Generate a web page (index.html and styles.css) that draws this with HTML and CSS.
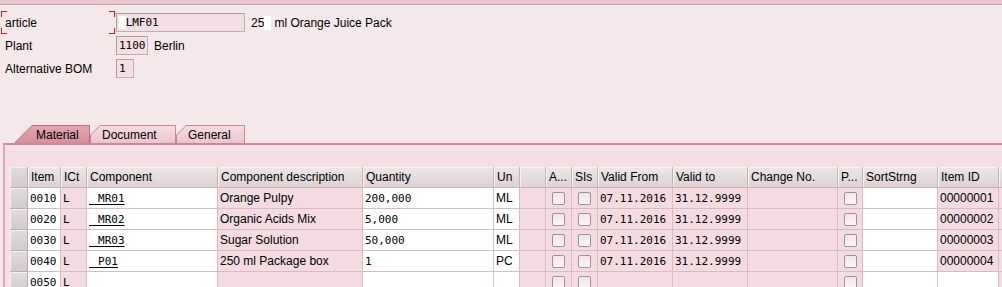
FILE: index.html
```html
<!DOCTYPE html>
<html lang="en">
<head>
  <meta charset="UTF-8" />
  <title>Display BOM: Item Overview</title>
  <link rel="stylesheet" href="styles.css">
</head>
<body>
  <div class="topbar"></div>

  <div class="head">
    <div class="field">
      <label class="lbl focus">article</label>
      <span class="inp w-mat"><span class="mask">&nbsp;</span>LMF01</span>
      <span class="note">25<span class="mask">0</span> ml Orange Juice Pack</span>
    </div>
    <div class="field">
      <label class="lbl">Plant</label>
      <span class="inp w-plant">1100</span>
      <span class="note">Berlin</span>
    </div>
    <div class="field">
      <label class="lbl">Alternative BOM</label>
      <span class="inp w-alt">1</span>
    </div>
  </div>

  <div class="tabs">
    <span class="tab active t-mat">Material</span>
    <span class="tab t-doc">Document</span>
    <span class="tab t-gen">General</span>
  </div>

  <div class="panel">
    <div class="grid">
      <!-- header -->
      <div class="th sel"></div>
      <div class="th">Item</div>
      <div class="th">ICt</div>
      <div class="th">Component</div>
      <div class="th">Component description</div>
      <div class="th">Quantity</div>
      <div class="th">Un</div>
      <div class="th"></div>
      <div class="th">A...</div>
      <div class="th">SIs</div>
      <div class="th">Valid From</div>
      <div class="th">Valid to</div>
      <div class="th">Change No.</div>
      <div class="th">P...</div>
      <div class="th">SortStrng</div>
      <div class="th">Item ID</div>
      <div class="th"></div>

      <!-- 0010 -->
      <div class="td sel"></div>
      <div class="td w mono">0010</div>
      <div class="td mono">L</div>
      <div class="td w mono"><span class="link"><span class="mask cmask">&nbsp;</span>MR01</span></div>
      <div class="td">Orange Pulpy</div>
      <div class="td w mono">200,000</div>
      <div class="td w">ML</div>
      <div class="td"></div>
      <div class="td chk"><span class="box"></span></div>
      <div class="td chk"><span class="box"></span></div>
      <div class="td mono">07.11.2016</div>
      <div class="td mono">31.12.9999</div>
      <div class="td"></div>
      <div class="td chk"><span class="box"></span></div>
      <div class="td w"></div>
      <div class="td">00000001</div>
      <div class="td"></div>

      <!-- 0020 -->
      <div class="td sel"></div>
      <div class="td w mono">0020</div>
      <div class="td mono">L</div>
      <div class="td w mono"><span class="link"><span class="mask cmask">&nbsp;</span>MR02</span></div>
      <div class="td">Organic Acids Mix</div>
      <div class="td w mono">5,000</div>
      <div class="td w">ML</div>
      <div class="td"></div>
      <div class="td chk"><span class="box"></span></div>
      <div class="td chk"><span class="box"></span></div>
      <div class="td mono">07.11.2016</div>
      <div class="td mono">31.12.9999</div>
      <div class="td"></div>
      <div class="td chk"><span class="box"></span></div>
      <div class="td w"></div>
      <div class="td">00000002</div>
      <div class="td"></div>

      <!-- 0030 -->
      <div class="td sel"></div>
      <div class="td w mono">0030</div>
      <div class="td mono">L</div>
      <div class="td w mono"><span class="link"><span class="mask cmask">&nbsp;</span>MR03</span></div>
      <div class="td">Sugar Solution</div>
      <div class="td w mono">50,000</div>
      <div class="td w">ML</div>
      <div class="td"></div>
      <div class="td chk"><span class="box"></span></div>
      <div class="td chk"><span class="box"></span></div>
      <div class="td mono">07.11.2016</div>
      <div class="td mono">31.12.9999</div>
      <div class="td"></div>
      <div class="td chk"><span class="box"></span></div>
      <div class="td w"></div>
      <div class="td">00000003</div>
      <div class="td"></div>

      <!-- 0040 -->
      <div class="td sel"></div>
      <div class="td w mono">0040</div>
      <div class="td mono">L</div>
      <div class="td w mono"><span class="link"><span class="mask cmask">&nbsp;</span>P01</span></div>
      <div class="td">250 ml Package box</div>
      <div class="td w mono">1</div>
      <div class="td w">PC</div>
      <div class="td"></div>
      <div class="td chk"><span class="box"></span></div>
      <div class="td chk"><span class="box"></span></div>
      <div class="td mono">07.11.2016</div>
      <div class="td mono">31.12.9999</div>
      <div class="td"></div>
      <div class="td chk"><span class="box"></span></div>
      <div class="td w"></div>
      <div class="td">00000004</div>
      <div class="td"></div>

      <!-- 0050 (new line) -->
      <div class="td sel"></div>
      <div class="td w mono">0050</div>
      <div class="td mono">L</div>
      <div class="td w"></div>
      <div class="td"></div>
      <div class="td w"></div>
      <div class="td w"></div>
      <div class="td"></div>
      <div class="td chk"><span class="box"></span></div>
      <div class="td chk"><span class="box"></span></div>
      <div class="td"></div>
      <div class="td"></div>
      <div class="td"></div>
      <div class="td chk"><span class="box"></span></div>
      <div class="td w"></div>
      <div class="td w"></div>
      <div class="td"></div>
    </div>
  </div>
</body>
</html>
```

FILE: styles.css
```css
html, body { margin: 0; overflow: hidden; }
body {
  width: 1002px;
  height: 287px;
  background: #f5e8eb;
  font-family: "Liberation Sans", Arial, sans-serif;
  font-size: 12px;
  color: #000;
}

.topbar {
  height: 4px;
  background: #e7c9d0;
  border-bottom: 1px solid #c9a1ab;
}

/* header fields */
.head { padding: 6px 0 0 1px; }
.field {
  display: flex;
  align-items: center;
  height: 23px;
}
.lbl {
  width: 114px;
  height: 23px;
  line-height: 24px;
  padding-left: 4px;
  box-sizing: border-box;
  color: #000;
}
.focus {
  --r: #d41c1c;
  background:
    linear-gradient(var(--r), var(--r)) left top / 6px 1px no-repeat,
    linear-gradient(var(--r), var(--r)) left top / 1px 6px no-repeat,
    linear-gradient(var(--r), var(--r)) right top / 6px 1px no-repeat,
    linear-gradient(var(--r), var(--r)) right top / 1px 6px no-repeat,
    linear-gradient(var(--r), var(--r)) left bottom / 6px 1px no-repeat,
    linear-gradient(var(--r), var(--r)) left bottom / 1px 6px no-repeat,
    linear-gradient(var(--r), var(--r)) right bottom / 6px 1px no-repeat,
    linear-gradient(var(--r), var(--r)) right bottom / 1px 6px no-repeat;
}
.inp {
  margin-left: 1px;
  height: 19px;
  line-height: 17px;
  box-sizing: border-box;
  padding: 0 2px;
  border: 1px solid #bcb0b3;
  border-top-color: #a99da0;
  border-left-color: #a99da0;
  background: #f3dfe3;
  font-family: "DejaVu Sans Mono", "Liberation Mono", monospace;
  font-size: 11px;
  color: #000;
  white-space: nowrap;
}
.w-mat { width: 129px; }
.w-plant { width: 32px; }
.w-alt { width: 18px; }
.note { margin-left: 6px; }
.mask { background: #fff; color: #fff; }
.cmask { letter-spacing: 2.4px; }

/* tabs */
.tabs {
  display: flex;
  margin-top: 45px;
  padding-left: 15px;
  height: 18px;
}
.tab {
  --s: 10px;
  position: relative;
  isolation: isolate;
  height: 18px;
  line-height: 21px;
  box-sizing: border-box;
  color: #000;
  background: #c78894;
  clip-path: polygon(var(--s) 0, 100% 0, 100% 100%, 0 100%, 0 var(--s));
}
.tab::before {
  content: "";
  position: absolute;
  inset: 1px 1px 0 1px;
  z-index: -1;
  background: linear-gradient(#f6dce2, #ebc4cd);
  clip-path: polygon(calc(var(--s) - 1px) 0, 100% 0, 100% 100%, 0 100%, 0 calc(var(--s) - 1px));
}
.tab.active { --s: 17px; background: #b8707e; }
.tab.active::before { background: linear-gradient(#e3a5b0, #d68f9c); }
.t-mat { width: 75px; padding-left: 21px; }
.t-doc { width: 86px; padding-left: 12px; }
.t-gen { width: 69px; padding-left: 12px; }

/* tab panel */
.panel {
  margin-left: 3px;
  border-top: 2px solid #c9899a;
  border-left: 2px solid #d9a7b1;
  background: #f4dfe4;
  padding: 22px 0 0 5px;
  height: 130px;
}

/* item table */
.grid {
  display: grid;
  grid-template-columns: 18px 33px 26px 131px 145px 131px 26px 26px 26px 26px 75px 75px 90px 25px 75px 61px 40px;
  grid-auto-rows: 21px;
  width: max-content;
}
.th, .td {
  box-sizing: border-box;
  border-right: 1px solid #d8bcc3;
  border-bottom: 1px solid #d8bcc3;
  padding-left: 2px;
  white-space: nowrap;
  overflow: hidden;
  line-height: 21px;
}
.th {
  background: linear-gradient(#efe6e8, #ddd1d4);
  border-right-color: #c3b4b8;
  border-bottom-color: #c3b4b8;
  box-shadow: inset 1px 1px 0 #f8f2f3;
  padding-left: 3px;
}
.td { background: #f3dbe1; }
.td.w { background: #fff; }
.td.sel, .th.sel {
  background: linear-gradient(#e2dcde, #d2cacd);
  box-shadow: inset 1px 1px 0 #f4f0f1;
  border-right-color: #b9aeb1;
  border-bottom-color: #b9aeb1;
}
.mono {
  font-family: "DejaVu Sans Mono", "Liberation Mono", monospace;
  font-size: 11px;
  color: #000;
}
.link {
  text-decoration: underline;
  text-underline-offset: 2px;
}
.chk {
  display: flex;
  align-items: center;
  justify-content: center;
  padding-left: 0;
}
.box {
  width: 13px;
  height: 13px;
  box-sizing: border-box;
  border: 1px solid #9a9294;
  border-radius: 2px;
  background: linear-gradient(#f2e6e9, #fbf5f6);
}
```
